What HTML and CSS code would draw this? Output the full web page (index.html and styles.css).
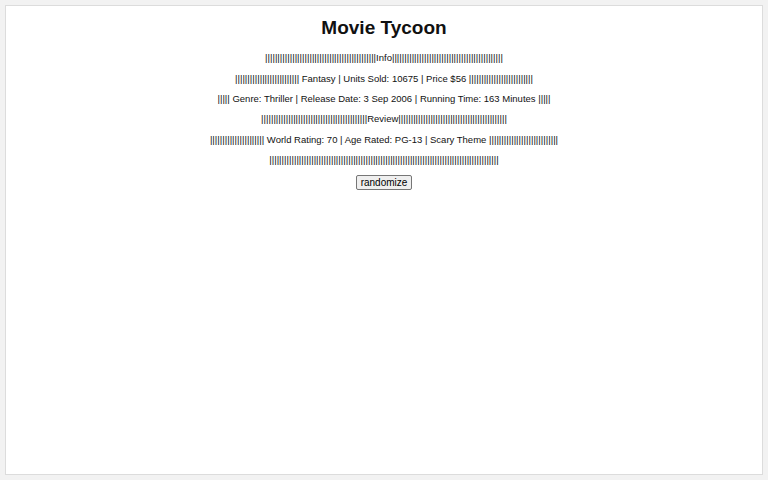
FILE: index.html
```html
<!DOCTYPE html>
<html lang="en">
	<head>
		<meta charset="UTF-8" />
		<meta name="viewport" content="width=device-width, initial-scale=1.0" />
		<title>Movie Tycoon</title>
		<link rel="stylesheet" href="styles.css">
	</head>
	<body>
		<div class="page">
			<h1>Movie Tycoon</h1>
			<div class="info">
				<p id="info-head"></p>
				<p id="info-main"></p>
				<p id="info-details"></p>
				<p id="review-head"></p>
				<p id="review-main"></p>
				<p id="review-foot"></p>
			</div>
			<button type="button" id="randomize">randomize</button>
		</div>

		<script>
			// pad a piece of text with bars on each side
			function bars(n) {
				return "|".repeat(n);
			}

			function render(movie) {
				document.getElementById("info-head").textContent = bars(45) + "Info" + bars(45);
				document.getElementById("info-main").textContent =
					bars(26) + " " + movie.genre2 + " | Units Sold: " + movie.units + " | Price $" + movie.price + " " + bars(26);
				document.getElementById("info-details").textContent =
					bars(5) + " Genre: " + movie.genre + " | Release Date: " + movie.date +
					" | Running Time: " + movie.time + " Minutes " + bars(5);
				document.getElementById("review-head").textContent = bars(43) + "Review" + bars(44);
				document.getElementById("review-main").textContent =
					bars(22) + " World Rating: " + movie.rating + " | Age Rated: " + movie.age + " | " + movie.theme + " " + bars(28);
				document.getElementById("review-foot").textContent = bars(93);
			}

			const genres = ["Fantasy", "Thriller", "Comedy", "Drama", "Horror", "Action"];
			const ages = ["G", "PG", "PG-13", "R"];
			const themes = ["Scary Theme", "Happy Theme", "Sad Theme", "Dark Theme"];
			const months = ["Jan", "Feb", "Mar", "Apr", "May", "Jun", "Jul", "Aug", "Sep", "Oct", "Nov", "Dec"];

			function pick(list) {
				return list[Math.floor(Math.random() * list.length)];
			}

			document.getElementById("randomize").addEventListener("click", function () {
				render({
					genre: pick(genres),
					genre2: pick(genres),
					units: Math.floor(Math.random() * 20000),
					price: Math.floor(Math.random() * 100),
					date: (1 + Math.floor(Math.random() * 28)) + " " + pick(months) + " " + (1980 + Math.floor(Math.random() * 40)),
					time: 80 + Math.floor(Math.random() * 100),
					rating: Math.floor(Math.random() * 100),
					age: pick(ages),
					theme: pick(themes)
				});
			});

			render({
				genre: "Thriller",
				genre2: "Fantasy",
				units: 10675,
				price: 56,
				date: "3 Sep 2006",
				time: 163,
				rating: 70,
				age: "PG-13",
				theme: "Scary Theme"
			});
		</script>
	</body>
</html>
```

FILE: styles.css
```css
body {
	font-family: "Liberation Sans", Arial, sans-serif;
	background-color: #f2f2f2;
	margin: 5px;
}

.page {
	height: 470px;
	box-sizing: border-box;
	background-color: #fff;
	border: 1px solid #dcdcdc;
	padding-top: 10px;
	text-align: center;
	color: #111;
}

h1 {
	font-size: 19px;
	line-height: 24px;
	margin: 0 0 8.2px;
}

.info p {
	font-size: 9.5px;
	line-height: 20.4px;
	margin: 0;
	white-space: nowrap;
}

button {
	margin-top: 4.4px;
	font-family: "Liberation Sans", Arial, sans-serif;
	font-size: 10px;
	padding: 1px 4px;
	background-color: #efefef;
	border: 1px solid #767676;
	border-radius: 2px;
	color: #000;
}
```
